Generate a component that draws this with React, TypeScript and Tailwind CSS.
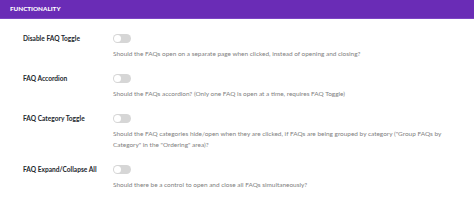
import React from 'react';

interface SettingRowProps {
  label: string;
  description: string;
}

function Toggle() {
  return (
    <div className="w-[18px] h-[9px] rounded-full bg-[#d6d6d6] flex items-center px-[1px] shrink-0">
      <div className="w-[7px] h-[7px] rounded-full bg-white" />
    </div>
  );
}

function SettingRow({ label, description }: SettingRowProps) {
  return (
    <div className="flex">
      <div className="w-[113px] pl-[23px] h-[9px] flex items-center shrink-0">
        <span className="text-[6.6px] font-bold text-[#23282d] whitespace-nowrap">{label}</span>
      </div>
      <div className="flex flex-col">
        <Toggle />
        <p className="mt-[5px] w-[335px] text-[6.45px] leading-[11px] text-[#808080]">{description}</p>
      </div>
    </div>
  );
}

const settings: SettingRowProps[] = [
  {
    label: 'Disable FAQ Toggle',
    description:
      'Should the FAQs open on a separate page when clicked, instead of opening and closing?',
  },
  {
    label: 'FAQ Accordion',
    description:
      'Should the FAQs accordion? (Only one FAQ is open at a time, requires FAQ Toggle)',
  },
  {
    label: 'FAQ Category Toggle',
    description:
      'Should the FAQ categories hide/open when they are clicked, if FAQs are being grouped by category ("Group FAQs by Category" in the "Ordering" area)?',
  },
  {
    label: 'FAQ Expand/Collapse All',
    description: 'Should there be a control to open and close all FAQs simultaneously?',
  },
];

export default function App() {
  return (
    <div
      className="w-[474px] h-[200px] bg-white overflow-hidden"
      style={{ fontFamily: 'Lato, "Open Sans", sans-serif' }}
    >
      <div className="h-[19px] bg-[#6a2cb6] border-b border-[#7d45c4] flex items-center pl-[10px]">
        <span className="text-[6.3px] font-black text-white">FUNCTIONALITY</span>
      </div>
      <div className="pt-[15px] flex flex-col gap-[15px]">
        {settings.map((s) => (
          <SettingRow key={s.label} label={s.label} description={s.description} />
        ))}
      </div>
    </div>
  );
}
